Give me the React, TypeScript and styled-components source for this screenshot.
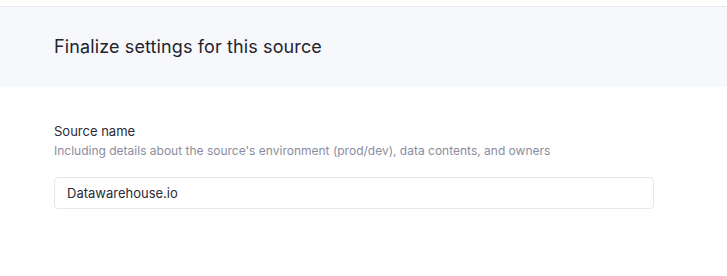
import styled, { createGlobalStyle } from 'styled-components';

const GlobalStyle = createGlobalStyle`
  html, body {
    margin: 0;
    padding: 0;
    background: #ffffff;
    font-family: Inter, "Noto Sans", sans-serif;
  }
`;

const Page = styled.div`
  padding-top: 6px;
  display: flex;
  flex-direction: column;
`;

const Header = styled.header`
  border-top: 1px solid #e9eaf1;
  background: #f7f8fc;
  padding: 28px 54px;
`;

const Title = styled.h1`
  margin: 0;
  font-size: 18px;
  line-height: 24px;
  font-weight: 400;
  letter-spacing: 0.12px;
  color: #23242f;
`;

const Body = styled.section`
  padding: 34px 54px;
  display: flex;
  flex-direction: column;
`;

const Label = styled.label`
  font-size: 13px;
  line-height: 20px;
  color: #2a2b38;
`;

const Hint = styled.p`
  margin: 1px 0 0;
  font-size: 12px;
  line-height: 18px;
  color: #8b8c9f;
`;

const Input = styled.input`
  box-sizing: border-box;
  margin-top: 17px;
  width: 600px;
  height: 32px;
  padding: 0 12px;
  border: 1px solid #e6e7ef;
  border-radius: 4px;
  background: #ffffff;
  font-family: Inter, "Noto Sans", sans-serif;
  font-size: 13px;
  color: #2a2b38;
  outline: none;
`;

const App = () => {
  return (
    <>
      <GlobalStyle />
      <Page>
        <Header>
          <Title>Finalize settings for this source</Title>
        </Header>
        <Body>
          <Label htmlFor="source-name">Source name</Label>
          <Hint>
            Including details about the source's environment (prod/dev), data contents, and owners
          </Hint>
          <Input id="source-name" defaultValue="Datawarehouse.io" />
        </Body>
      </Page>
    </>
  );
};

export default App;
